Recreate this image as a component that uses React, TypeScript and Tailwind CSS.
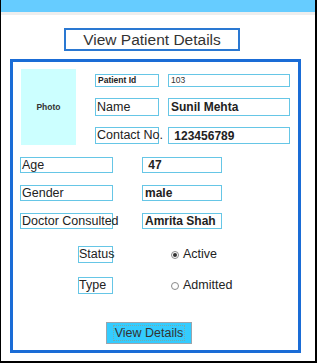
import React from 'react'

const font = { fontFamily: '"Liberation Sans", Arial, sans-serif' }

function Field({ label, value, labelW, valueW, gap, ml, h = 'h-[16px]' }: {
  label: string
  value: string
  labelW: string
  valueW: string
  gap: string
  ml: string
  h?: string
}) {
  return (
    <div className={`flex ${ml} ${gap}`}>
      <div className={`${labelW} ${h} flex items-center whitespace-nowrap border border-[#66c6e6] px-px text-[12.5px] leading-none text-[#222]`}>
        {label}
      </div>
      <div className={`${valueW} ${h} flex items-center whitespace-pre border border-[#66c6e6] px-[2px] text-[12px] font-bold leading-none text-[#222]`}>
        {value}
      </div>
    </div>
  )
}

function Radio({ checked, label }: { checked?: boolean; label: string }) {
  return (
    <div className="flex items-center gap-[4px] whitespace-nowrap text-[12.5px] leading-none text-[#222]">
      <span className="flex h-[8px] w-[8px] items-center justify-center rounded-full border border-[#8a8a8a] bg-white">
        {checked && <span className="h-[4px] w-[4px] rounded-full bg-[#333]" />}
      </span>
      {label}
    </div>
  )
}

export default function App() {
  return (
    <div className="h-[364px] w-[319px] bg-white" style={font}>
      <div className="flex h-[363px] w-[317px] flex-col border-b-2 border-l border-r-2 border-black">
        <div className="h-[12px] bg-[#66ccff]" />
        <div className="h-[3px] bg-[#eeeeee]" />

        {/* title */}
        <div className="ml-[63px] mt-[13px] flex h-[23px] w-[176px] items-center justify-center whitespace-nowrap border-2 border-[#2a78d2] text-[15.5px] text-[#333]">
          View Patient Details
        </div>

        {/* panel */}
        <div className="ml-[9px] mt-[8px] flex h-[294px] w-[291px] flex-col border-[3px] border-[#1a6cd6]">
          <div className="ml-[8px] mt-[7px] flex">
            <div className="flex h-[76px] w-[55px] items-center justify-center bg-[#ccffff] text-[8.5px] font-bold text-[#333]">
              Photo
            </div>
            <div className="ml-[19px] mt-[5px] flex flex-col">
              <div className="flex gap-[9px]">
                <div className="flex h-[13px] w-[64px] items-center whitespace-nowrap border border-[#66c6e6] px-[2px] text-[8.5px] font-bold leading-none text-[#222]">
                  Patient Id
                </div>
                <div className="flex h-[13px] w-[122px] items-center border border-[#66c6e6] px-[2px] text-[8.5px] leading-none text-[#333]">
                  103
                </div>
              </div>
              <div className="mt-[11px]">
                <Field label="Name" value="Sunil Mehta" labelW="w-[64px]" valueW="w-[122px]" gap="gap-[9px]" ml="" h="h-[18px]" />
              </div>
              <div className="mt-[11px]">
                <Field label="Contact No." value=" 123456789" labelW="w-[64px]" valueW="w-[122px]" gap="gap-[9px]" ml="" h="h-[17px]" />
              </div>
            </div>
          </div>

          <div className="mt-[12px] flex flex-col gap-[12px]">
            <Field label="Age" value=" 47" labelW="w-[93px]" valueW="w-[80px]" gap="gap-[29px]" ml="ml-[7px]" />
            <Field label="Gender" value="male" labelW="w-[93px]" valueW="w-[80px]" gap="gap-[29px]" ml="ml-[7px]" />
            <Field label="Doctor Consulted" value="Amrita Shah" labelW="w-[93px]" valueW="w-[80px]" gap="gap-[29px]" ml="ml-[7px]" />
          </div>

          <div className="ml-[65px] mt-[17px] flex items-center">
            <div className="flex h-[17px] w-[35px] items-center whitespace-nowrap border border-[#66c6e6] text-[12.5px] leading-none text-[#222]">
              Status
            </div>
            <div className="ml-[58px]">
              <Radio checked label="Active" />
            </div>
          </div>
          <div className="ml-[65px] mt-[14px] flex items-center">
            <div className="flex h-[17px] w-[35px] items-center whitespace-nowrap border border-[#66c6e6] text-[12.5px] leading-none text-[#222]">
              Type
            </div>
            <div className="ml-[58px]">
              <Radio label="Admitted" />
            </div>
          </div>

          <button className="ml-[93px] mt-[28px] flex h-[22px] w-[86px] items-center justify-center border border-[#9aa5ad] bg-[#33ccff] text-[12.5px] text-[#333]">
            <span className="whitespace-pre border border-dotted border-[#7aa] px-px leading-[14px]">View Details</span>
          </button>
        </div>
      </div>
    </div>
  )
}
